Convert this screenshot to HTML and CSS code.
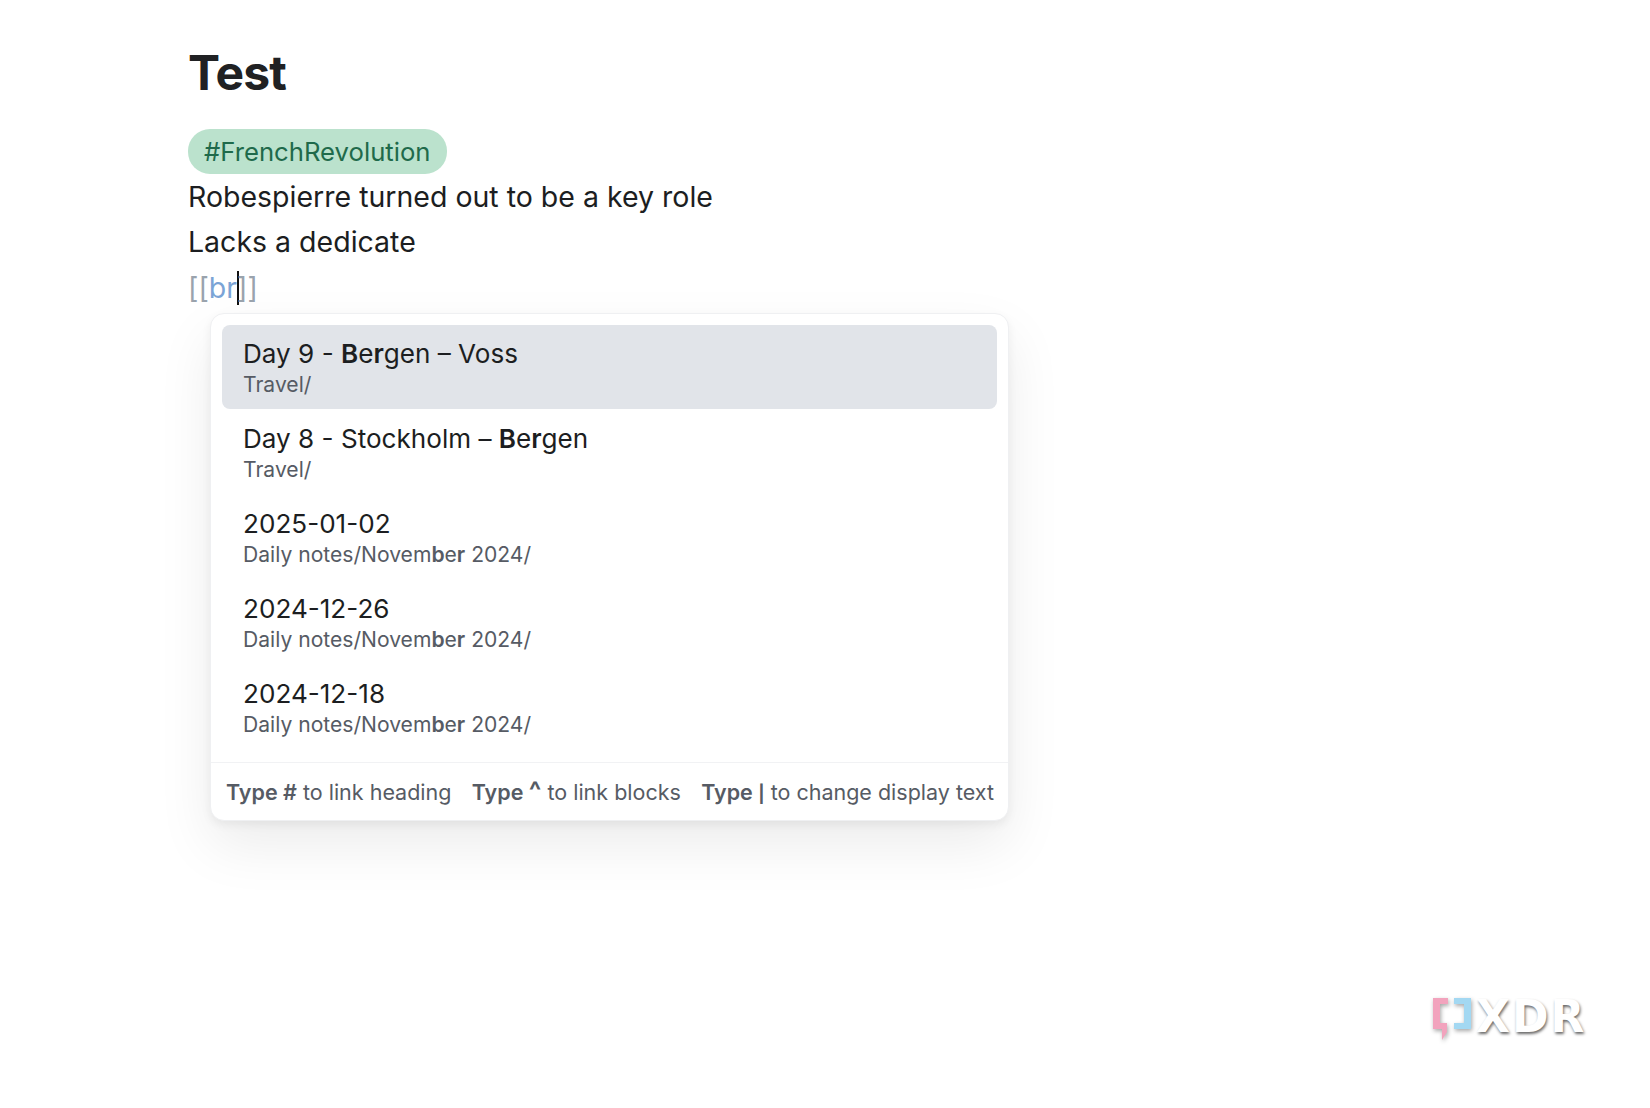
FILE: index.html
```html
<!DOCTYPE html>
<html lang="en">
<head>
    <meta charset="UTF-8">
    <meta name="viewport" content="width=device-width, initial-scale=1.0">
    <title>Test</title>
    <link rel="stylesheet" href="styles.css">
</head>
<body>
    <main class="note">
        <h1 class="note-title">Test</h1>
        <div class="note-line tag-line"><span class="tag">#FrenchRevolution</span></div>
        <div class="note-line">Robespierre turned out to be a key role</div>
        <div class="note-line">Lacks a dedicate</div>
        <div class="note-line link-line"><span class="bracket">[[</span><span class="link-text">br</span><span class="cursor"></span><span class="bracket">]]</span></div>

        <div class="suggest">
            <ul class="suggest-list">
                <li class="suggest-item selected">
                    <div class="item-title">Day 9 - <b>B</b>e<b>r</b>gen – Voss</div>
                    <div class="item-path">Travel/</div>
                </li>
                <li class="suggest-item">
                    <div class="item-title">Day 8 - Stockholm – <b>B</b>e<b>r</b>gen</div>
                    <div class="item-path">Travel/</div>
                </li>
                <li class="suggest-item">
                    <div class="item-title">2025-01-02</div>
                    <div class="item-path">Daily notes/Novem<b>b</b>e<b>r</b> 2024/</div>
                </li>
                <li class="suggest-item">
                    <div class="item-title">2024-12-26</div>
                    <div class="item-path">Daily notes/Novem<b>b</b>e<b>r</b> 2024/</div>
                </li>
                <li class="suggest-item">
                    <div class="item-title">2024-12-18</div>
                    <div class="item-path">Daily notes/Novem<b>b</b>e<b>r</b> 2024/</div>
                </li>
            </ul>
            <div class="suggest-hints">
                <span><b>Type #</b> to link heading</span>
                <span><b>Type <span class="caret">^</span></b> to link blocks</span>
                <span><b>Type <span class="pipe">|</span></b> to change display text</span>
            </div>
        </div>
    </main>

    <div class="watermark">
        <svg class="watermark-icon" width="42" height="46" viewBox="0 0 42 46">
            <path d="M18 2H3v31h9v11l5-8V27h-7V8h8z" fill="#f2a3bd"/>
            <path d="M24 2h17v31H24v-6h10V8H24z" fill="#a3d8f2"/>
        </svg>
        <span class="watermark-text">XDR</span>
    </div>
</body>
</html>
```

FILE: styles.css
```css
body {
    font-family: Inter, "Noto Sans", sans-serif;
    margin: 0;
    background-color: #fff;
    color: #1c1e21;
    height: 1108px;
    overflow: hidden;
}

b {
    font-weight: 600;
}

.note {
    padding: 39px 0 0 188px;
}

.note-title {
    font-size: 48px;
    line-height: 68px;
    font-weight: 700;
    letter-spacing: -0.8px;
    color: #202123;
    margin: 0 0 22px;
}

.note-line {
    font-size: 28.5px;
    line-height: 45px;
}

.tag-line {
    display: flex;
}

.tag {
    background-color: #bbe2cd;
    color: #1f6a4b;
    border-radius: 22px;
    padding: 0 16px;
    line-height: 45px;
    font-size: 25.7px;
}

.link-line {
    display: flex;
    align-items: center;
    margin-top: 1px;
}

.bracket {
    color: #9aa3ad;
}

.link-text {
    color: #7ba4d6;
}

.cursor {
    width: 2px;
    height: 34px;
    margin: 0 -2px 0 0;
    background-color: #111;
}

.suggest {
    width: 799px;
    height: 508px;
    margin: 3px 0 0 22px;
    box-sizing: border-box;
    display: flex;
    flex-direction: column;
    background-color: #fff;
    border: 1px solid #eff0f2;
    border-radius: 14px;
    box-shadow: 0 24px 56px rgba(0, 0, 0, 0.08), 0 4px 10px rgba(0, 0, 0, 0.06);
}

.suggest-list {
    list-style-type: none;
    margin: 0;
    padding: 11px 11px 0;
    flex: 1;
}

.suggest-item {
    height: 85px;
    box-sizing: border-box;
    padding: 11px 21px 0;
    border-radius: 8px;
}

.suggest-item.selected {
    height: 84px;
    margin-bottom: 1px;
    background-color: #e1e4e9;
}

.item-title {
    font-size: 26.1px;
    line-height: 35px;
}

.item-path {
    font-size: 21.1px;
    line-height: 27px;
    color: #565b64;
}

.suggest-hints {
    height: 57px;
    border-top: 1px solid #f1f2f4;
    display: flex;
    justify-content: space-between;
    align-items: center;
    padding: 0 14px 0 15px;
    font-size: 21.5px;
    color: #565b64;
}

.caret {
    font-size: 1.2em;
    font-weight: 700;
    line-height: 1;
}

.pipe {
    font-size: 0.8em;
    font-weight: 700;
    line-height: 1;
}

.watermark {
    position: absolute;
    left: 1430px;
    top: 996px;
    display: flex;
    align-items: flex-start;
    gap: 4px;
}

.watermark-icon {
    filter: drop-shadow(1px 2px 2px rgba(0, 0, 0, 0.35));
}

.watermark-text {
    font-family: "DejaVu Sans", sans-serif;
    font-size: 44px;
    line-height: 42px;
    font-weight: 700;
    letter-spacing: 2px;
    color: #fff;
    text-shadow: 1px 2px 3px rgba(0, 0, 0, 0.6);
}
```
